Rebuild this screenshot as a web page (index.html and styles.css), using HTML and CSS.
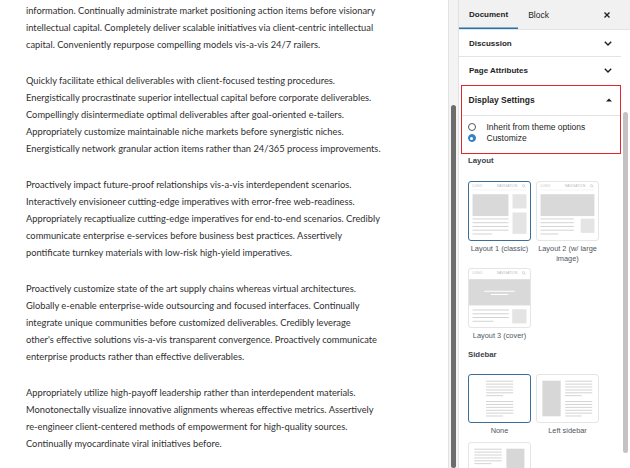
FILE: index.html
```html
<!DOCTYPE html>
<html lang="en">
<head>
<meta charset="utf-8">
<title>Editor</title>
<link rel="stylesheet" href="styles.css">
</head>
<body>
<div class="app">
  <main class="editor">
    <p>information. Continually administrate market positioning action items before visionary<br>intellectual capital. Completely deliver scalable initiatives via client-centric intellectual<br>capital. Conveniently repurpose compelling models vis-a-vis 24/7 railers.</p>
    <p>Quickly facilitate ethical deliverables with client-focused testing procedures.<br>Energistically procrastinate superior intellectual capital before corporate deliverables.<br>Compellingly disintermediate optimal deliverables after goal-oriented e-tailers.<br>Appropriately customize maintainable niche markets before synergistic niches.<br>Energistically network granular action items rather than 24/365 process improvements.</p>
    <p>Proactively impact future-proof relationships vis-a-vis interdependent scenarios.<br>Interactively envisioneer cutting-edge imperatives with error-free web-readiness.<br>Appropriately recaptiualize cutting-edge imperatives for end-to-end scenarios. Credibly<br>communicate enterprise e-services before business best practices. Assertively<br>pontificate turnkey materials with low-risk high-yield imperatives.</p>
    <p>Proactively customize state of the art supply chains whereas virtual architectures.<br>Globally e-enable enterprise-wide outsourcing and focused interfaces. Continually<br>integrate unique communities before customized deliverables. Credibly leverage<br>other's effective solutions vis-a-vis transparent convergence. Proactively communicate<br>enterprise products rather than effective deliverables.</p>
    <p>Appropriately utilize high-payoff leadership rather than interdependent materials.<br>Monotonectally visualize innovative alignments whereas effective metrics. Assertively<br>re-engineer client-centered methods of empowerment for high-quality sources.<br>Continually myocardinate viral initiatives before.</p>
  </main>
  <div class="editor-scroll"><div class="thumb"></div></div>
  <aside class="sidebar">
    <div class="sb-header">
      <div class="tab active">Document</div>
      <div class="tab">Block</div>
      <div class="close"><svg width="6" height="6" viewBox="0 0 6 6"><path d="M0.5 0.5L5.5 5.5M5.5 0.5L0.5 5.5" stroke="#1e1e1e" stroke-width="1.3" fill="none"/></svg></div>
    </div>
    <div class="sb-body">
      <div class="sb-content">
        <div class="panel"><span>Discussion</span><svg class="chev" width="8" height="5" viewBox="0 0 8 5"><path d="M0.8 0.8L4 4L7.2 0.8" stroke="#1e1e1e" stroke-width="1.4" fill="none"/></svg></div>
        <div class="panel last"><span>Page Attributes</span><svg class="chev" width="8" height="5" viewBox="0 0 8 5"><path d="M0.8 0.8L4 4L7.2 0.8" stroke="#1e1e1e" stroke-width="1.4" fill="none"/></svg></div>
        <div class="highlight">
          <div class="hl-title"><span>Display Settings</span><svg width="6" height="4" viewBox="0 0 6 4"><path d="M0 3.6L3 0.4L6 3.6Z" fill="#1e1e1e"/></svg></div>
          <div class="radios">
            <div class="radio-row"><span class="radio"></span><span>Inherit from theme options</span></div>
            <div class="radio-row"><span class="radio checked"><span class="dot"></span></span><span>Customize</span></div>
          </div>
        </div>
        <div class="section">
          <div class="sec-label layout-label">Layout</div>
          <div class="grid">
            <div class="opt">
              <div class="card sel">
                <svg viewBox="0 0 60 57">
                  <text x="3.5" y="5" class="tiny">LOGO</text>
                  <text x="27.5" y="5" class="tiny">NAVIGATION</text>
                  <circle cx="53.6" cy="3.6" r="1.1" fill="none" stroke="#b5b5b5" stroke-width="0.5"/>
                  <path d="M54.4 4.4L55.5 5.5" stroke="#b5b5b5" stroke-width="0.5"/>
                  <path d="M3.5 7.8H56.5" stroke="#ededed" stroke-width="0.6"/>
                  <rect x="3.5" y="12" width="35.3" height="21.5" fill="#d9d9d9"/>
                  <rect x="42.8" y="12" width="13.7" height="14" fill="#e4e4e4"/>
                  <rect x="42.8" y="30" width="13.7" height="21" fill="#e4e4e4"/>
                  <path d="M3.5 36.3H38.8M3.5 40H38.8M3.5 43.7H38.8M3.5 47.4H38.8M3.5 51.1H22.5" stroke="#cfcfcf" stroke-width="0.9"/>
                </svg>
              </div>
              <div class="cap">Layout 1 (classic)</div>
            </div>
            <div class="opt">
              <div class="card">
                <svg viewBox="0 0 60 57">
                  <text x="3.5" y="5" class="tiny">LOGO</text>
                  <text x="27.5" y="5" class="tiny">NAVIGATION</text>
                  <circle cx="53.6" cy="3.6" r="1.1" fill="none" stroke="#b5b5b5" stroke-width="0.5"/>
                  <path d="M54.4 4.4L55.5 5.5" stroke="#b5b5b5" stroke-width="0.5"/>
                  <path d="M3.5 7.8H56.5" stroke="#ededed" stroke-width="0.6"/>
                  <rect x="3.5" y="12" width="53" height="21.5" fill="#d9d9d9"/>
                  <rect x="43" y="36" width="13.5" height="14" fill="#e4e4e4"/>
                  <path d="M3.5 36.3H36.2M3.5 40H36.2M3.5 43.7H36.2M3.5 47.4H36.2M3.5 51.1H21" stroke="#cfcfcf" stroke-width="0.9"/>
                </svg>
              </div>
              <div class="cap">Layout 2 (w/ large<br>image)</div>
            </div>
            <div class="opt">
              <div class="card">
                <svg viewBox="0 0 60 57">
                  <text x="3.5" y="5" class="tiny">LOGO</text>
                  <text x="27.5" y="5" class="tiny">NAVIGATION</text>
                  <circle cx="53.6" cy="3.6" r="1.1" fill="none" stroke="#b5b5b5" stroke-width="0.5"/>
                  <path d="M54.4 4.4L55.5 5.5" stroke="#b5b5b5" stroke-width="0.5"/>
                  <rect x="0" y="10" width="60" height="25.8" fill="#d9d9d9"/>
                  <path d="M15 21.8H45M21.5 25H38.5" stroke="#ffffff" stroke-width="1.1"/>
                  <rect x="42.5" y="39.5" width="14" height="14" fill="#e4e4e4"/>
                  <path d="M3.5 40.3H39.2M3.5 44H39.2M3.5 47.7H39.2M3.5 51.4H24" stroke="#cfcfcf" stroke-width="0.9"/>
                </svg>
              </div>
              <div class="cap">Layout 3 (cover)</div>
            </div>
          </div>
          <div class="sec-label sidebar-label">Sidebar</div>
          <div class="grid sb-grid">
            <div class="opt">
              <div class="card sel">
                <svg viewBox="0 0 60 46">
                  <path d="M16.8 6H43.5M16.8 8.9H43.5M16.8 11.7H43.5M16.8 14.6H43.5M16.8 17.4H43.5M16.8 20.2H33.5M16.8 26H43.5M16.8 28.9H43.5M16.8 31.7H43.5M16.8 34.6H43.5M16.8 37.4H43.5M16.8 40.2H33.5" stroke="#cfcfcf" stroke-width="0.9"/>
                </svg>
              </div>
              <div class="cap">None</div>
            </div>
            <div class="opt">
              <div class="card">
                <svg viewBox="0 0 60 46">
                  <rect x="5.3" y="5.5" width="18" height="35" fill="#d7d7d7"/>
                  <path d="M27.7 6H54.3M27.7 8.9H54.3M27.7 11.7H54.3M27.7 14.6H54.3M27.7 17.4H54.3M27.7 20.2H44M27.7 26H54.3M27.7 28.9H54.3M27.7 31.7H54.3M27.7 34.6H54.3M27.7 37.4H54.3M27.7 40.2H44" stroke="#cfcfcf" stroke-width="0.9"/>
                </svg>
              </div>
              <div class="cap">Left sidebar</div>
            </div>
            <div class="opt">
              <div class="card">
                <svg viewBox="0 0 60 46">
                  <rect x="36.8" y="5.5" width="17.7" height="35" fill="#d7d7d7"/>
                  <path d="M5.2 6H32.2M5.2 8.9H32.2M5.2 11.7H32.2M5.2 14.6H32.2M5.2 17.4H32.2M5.2 20.2H22M5.2 26H32.2M5.2 28.9H32.2M5.2 31.7H32.2M5.2 34.6H32.2M5.2 37.4H32.2M5.2 40.2H22" stroke="#cfcfcf" stroke-width="0.9"/>
                </svg>
              </div>
            </div>
          </div>
        </div>
      </div>
      <div class="sb-scroll"><div class="thumb2"></div></div>
    </div>
  </aside>
</div>
</body>
</html>
```
FILE: styles.css
```css
html, body {
  margin: 0;
  padding: 0;
  background: #ffffff;
}
body {
  width: 630px;
  height: 468px;
  overflow: hidden;
}
.app {
  display: flex;
  height: 468px;
}
.editor {
  flex: none;
  width: 449px;
  box-sizing: border-box;
  border-right: 1px solid #e2e2e2;
  padding: 1.5px 0 0 26px;
  overflow: hidden;
  font-family: Lato, "Liberation Sans", sans-serif;
  font-size: 9.3px;
  line-height: 17px;
  color: #2f2f2f;
}
.editor p {
  margin: 0 0 19px;
  white-space: nowrap;
}
.editor-scroll {
  flex: none;
  width: 9px;
  box-sizing: border-box;
  background: #f3f3f3;
  padding: 105px 0 0 2px;
}
.editor-scroll .thumb {
  width: 5px;
  height: 100%;
  background: #6c6c6c;
  border-radius: 3px;
}
.sidebar {
  flex: 1;
  min-width: 0;
  border-left: 1px solid #e2e2e2;
  display: flex;
  flex-direction: column;
  font-family: "Liberation Sans", Arial, sans-serif;
  color: #1e1e1e;
}
.sb-header {
  flex: none;
  height: 30px;
  box-sizing: border-box;
  background: #f1f1f1;
  border-bottom: 1px solid #e2e4e7;
  display: flex;
}
.tab {
  padding: 0 10px;
  display: flex;
  align-items: center;
  font-size: 8.5px;
}
.tab.active {
  font-weight: bold;
  font-size: 8px;
  box-shadow: inset 0 -1.6px #2271b1;
}
.close {
  margin-left: auto;
  padding-right: 20px;
  display: flex;
  align-items: center;
}
.close svg {
  display: block;
}
.sb-body {
  flex: 1;
  min-height: 0;
  display: flex;
}
.sb-content {
  flex: 1;
  min-width: 0;
  overflow: hidden;
}
.sb-scroll {
  flex: none;
  width: 9px;
  box-sizing: border-box;
  padding: 82px 0 0 2px;
}
.thumb2 {
  width: 5px;
  height: 341px;
  background: #c3c3c3;
  border-radius: 3px;
}
.panel {
  height: 27px;
  box-sizing: border-box;
  display: flex;
  align-items: center;
  justify-content: space-between;
  padding: 0 9px 0 10px;
  border-bottom: 1px solid #e2e4e7;
  font-weight: bold;
  font-size: 8px;
}
.panel.last {
  border-bottom: none;
  height: 27.5px;
}
.chev {
  display: block;
}
.highlight {
  margin-left: 1.5px;
  border: 1.5px solid #e3262b;
}
.hl-title {
  height: 30.5px;
  box-sizing: border-box;
  display: flex;
  align-items: center;
  justify-content: space-between;
  padding: 0 8.5px 0 7px;
  border-bottom: 1px solid #e2e4e7;
  font-weight: bold;
  font-size: 8.5px;
}
.hl-title svg {
  display: block;
}
.radios {
  padding: 5.5px 0 9px 6px;
}
.radio-row {
  height: 11px;
  display: flex;
  align-items: center;
  font-size: 8.5px;
}
.radio {
  flex: none;
  width: 8px;
  height: 8px;
  box-sizing: border-box;
  border-radius: 50%;
  border: 1px solid #50575e;
  margin-right: 11px;
  display: flex;
  align-items: center;
  justify-content: center;
}
.radio.checked {
  background: #3582c4;
  border-color: #3582c4;
}
.radio .dot {
  width: 3px;
  height: 3px;
  border-radius: 50%;
  background: #ffffff;
}
.section {
  padding: 2px 0 0 9px;
}
.sec-label {
  font-size: 7.8px;
  font-weight: bold;
  line-height: 10px;
  color: #3c434a;
}
.layout-label {
  margin-bottom: 15.7px;
}
.sidebar-label {
  margin-top: 10px;
  margin-bottom: 14.3px;
}
.grid {
  display: grid;
  grid-template-columns: 63px 63px;
  column-gap: 5px;
  row-gap: 4.5px;
}
.sb-grid {
  row-gap: 6px;
}
.card {
  width: 63px;
  height: 60px;
  box-sizing: border-box;
  border: 1.5px solid #e5e5e5;
  border-radius: 3px;
  background: #ffffff;
}
.sb-grid .card {
  height: 49px;
}
.card.sel {
  border-color: #3b6e9b;
}
.card svg {
  display: block;
  width: 100%;
  height: 100%;
}
.tiny {
  font-family: "Liberation Sans", Arial, sans-serif;
  font-size: 3.1px;
  fill: #b5b5b5;
  letter-spacing: 0.15px;
}
.cap {
  margin-top: 3px;
  font-size: 7.4px;
  line-height: 9.5px;
  text-align: center;
  color: #50575e;
  white-space: nowrap;
}
```
